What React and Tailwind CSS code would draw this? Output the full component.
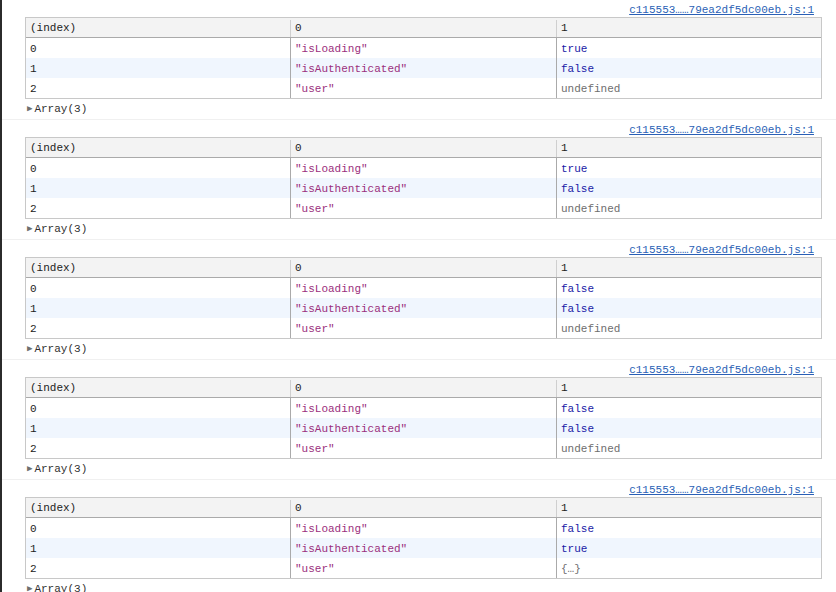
import React from 'react';

const blocks = [
  ['true', 'false', 'undefined'],
  ['true', 'false', 'undefined'],
  ['false', 'false', 'undefined'],
  ['false', 'false', 'undefined'],
  ['false', 'true', '{…}'],
];

const keys = ['"isLoading"', '"isAuthenticated"', '"user"'];

const valueColor = (v) =>
  v === 'true' || v === 'false' ? 'text-[#1a1aa6]' : 'text-[#6e6e6e]';

const TableMessage = ({ values }) => (
  <div className="h-[120px] shrink-0 border-b border-[#f0f0f0] flex flex-col">
    {/* source link */}
    <div className="h-[17px] flex justify-end pr-[22px] pt-[4px] leading-[13px]">
      <span className="text-[#2a5fb5] underline underline-offset-1">c115553……79ea2df5dc00eb.js:1</span>
    </div>

    {/* table */}
    <div className="ml-[23px] w-[797px] border border-[#c8c8c8]">
      <div className="grid grid-cols-[264px_266px_1fr] h-[20px] bg-[#f3f3f3] border-b border-[#aaaaaa] pt-[2px] leading-[17px] text-[#222]">
        <div className="pl-[4px]">(index)</div>
        <div className="pl-[4px] border-l border-[#cfcfcf]">0</div>
        <div className="pl-[4px] border-l border-[#cfcfcf]">1</div>
      </div>
      {keys.map((k, i) => (
        <div
          key={k}
          className={`grid grid-cols-[264px_266px_1fr] h-[20px] ${i === 1 ? 'bg-[#f0f6fe]' : 'bg-white'}`}
        >
          <div className="pl-[4px] pt-[3px] leading-[17px] text-[#222]">{i}</div>
          <div className="pl-[4px] pt-[3px] leading-[17px] border-l border-[#aaaaaa] text-[#9b2f7d]">{k}</div>
          <div className={`pl-[4px] pt-[3px] leading-[17px] border-l border-[#aaaaaa] ${valueColor(values[i])}`}>{values[i]}</div>
        </div>
      ))}
    </div>

    {/* collapsed array */}
    <div className="h-[17px] flex items-center pl-[25px] pt-[4px] text-[#303030]">
      <span className="text-[9px] text-[#6f6f6f] mr-[2px]">▶</span>
      <span>Array(3)</span>
    </div>
  </div>
);

export default function App() {
  return (
    <div
      className="w-[836px] h-[592px] overflow-hidden bg-white border-l-2 border-[#2b2b2b] flex flex-col text-[11px]"
      style={{ fontFamily: '"Liberation Mono", "DejaVu Sans Mono", monospace' }}
    >
      {blocks.map((values, i) => (
        <TableMessage key={i} values={values} />
      ))}
    </div>
  );
}
